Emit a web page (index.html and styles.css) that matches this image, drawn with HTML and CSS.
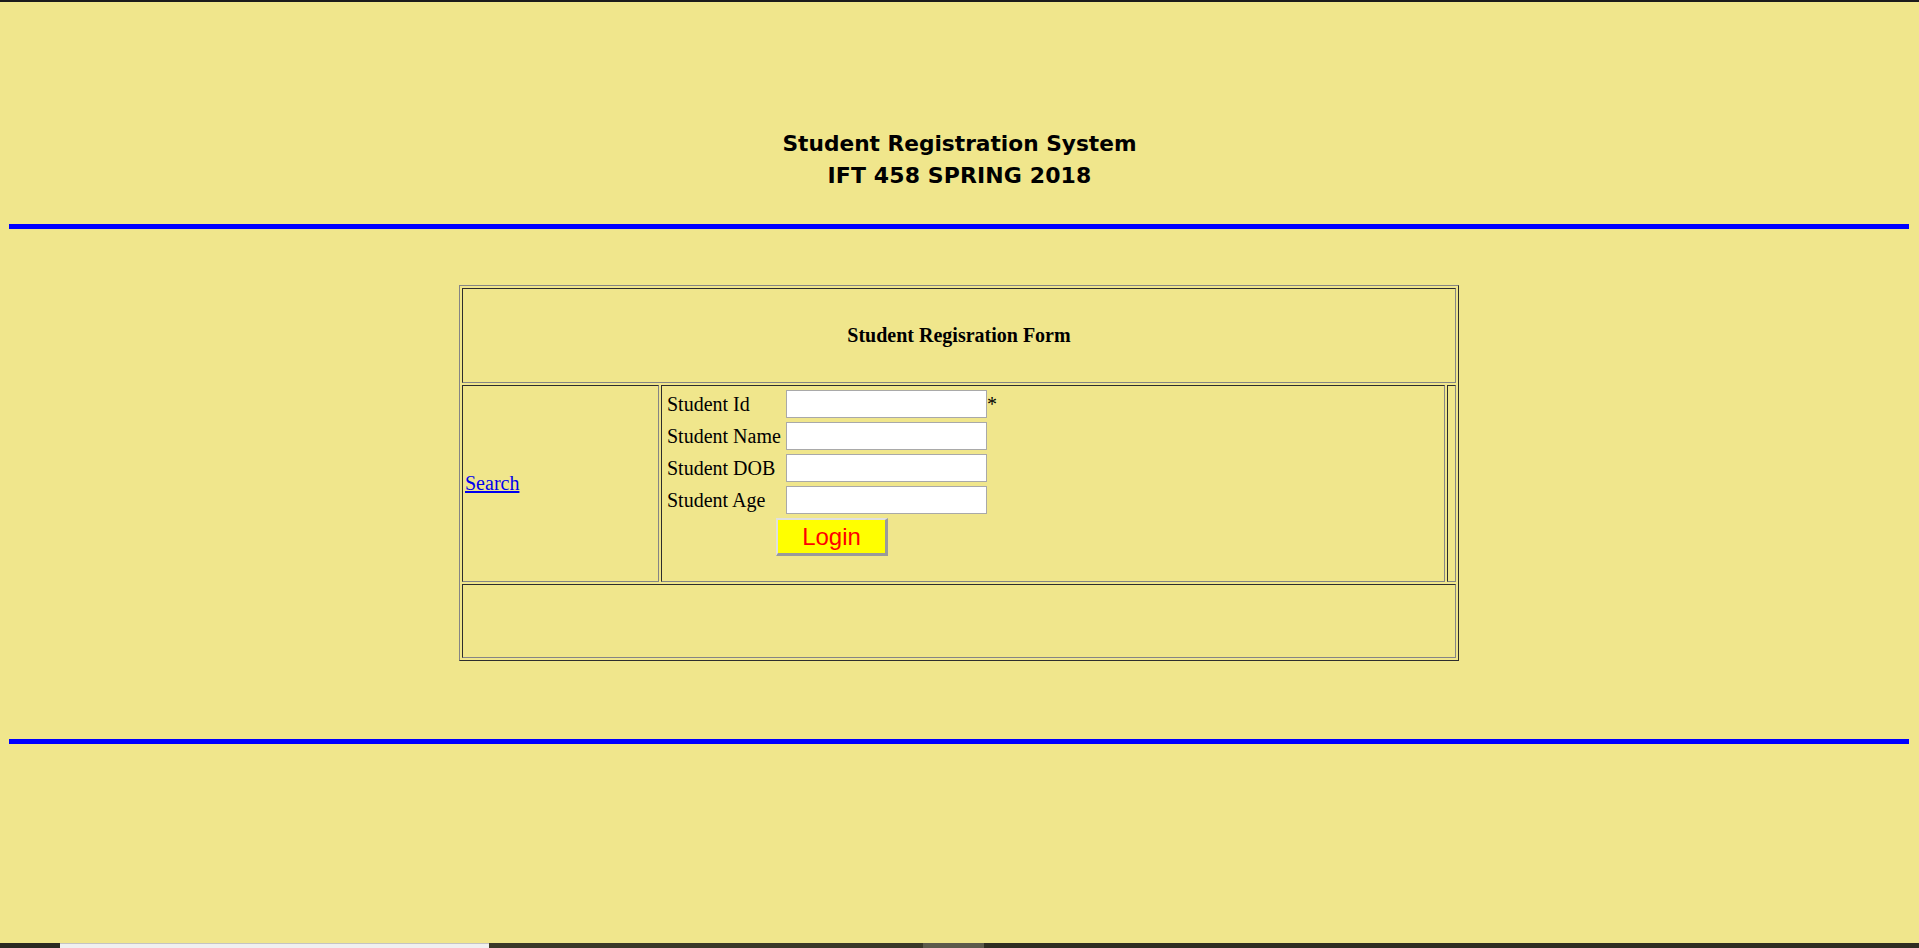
FILE: index.html
```html
<!DOCTYPE html>
<html lang="en">
<head>
<meta charset="utf-8">
<title>Student Registration System</title>
<link rel="stylesheet" href="styles.css">
</head>
<body>
  <div class="topline"></div>
  <header class="banner">
    <div class="banner-line banner-line-1">Student Registration System</div>
    <div class="banner-line banner-line-2">IFT 458 SPRING 2018</div>
  </header>
  <div class="rule rule-top"></div>

  <table class="regform">
    <tr>
      <td class="cell cell-title" colspan="3">Student Regisration Form</td>
    </tr>
    <tr>
      <td class="cell cell-nav"><a class="nav-link" href="#">Search</a></td>
      <td class="cell cell-main">
        <form class="fields">
          <label class="field-label" for="sid">Student Id</label>
          <input class="field-input" id="sid" type="text">
          <span class="field-req">*</span>

          <label class="field-label" for="sname">Student Name</label>
          <input class="field-input" id="sname" type="text">
          <span class="field-req"></span>

          <label class="field-label" for="sdob">Student DOB</label>
          <input class="field-input" id="sdob" type="text">
          <span class="field-req"></span>

          <label class="field-label" for="sage">Student Age</label>
          <input class="field-input" id="sage" type="text">
          <span class="field-req"></span>

          <button class="login-btn" type="button">Login</button>
        </form>
      </td>
      <td class="cell cell-edge"></td>
    </tr>
    <tr>
      <td class="cell cell-foot" colspan="3"></td>
    </tr>
  </table>

  <div class="rule rule-bottom"></div>

  <div class="taskbar">
    <span class="seg seg-start"></span>
    <span class="seg seg-search"></span>
    <span class="seg seg-mid"></span>
    <span class="seg seg-app"></span>
    <span class="seg seg-rest"></span>
  </div>
</body>
</html>
```

FILE: styles.css
```css
html, body {
  margin: 0;
  padding: 0;
}

body {
  background: #f0e68c;
  color: #000;
  font-family: "Liberation Serif", "Times New Roman", serif;
  font-size: 20px;
  min-height: 948px;
}

.topline {
  height: 2px;
  background: #1b1b1b;
}

.banner {
  margin-top: 126px;
  text-align: center;
  font-family: "DejaVu Sans", Verdana, sans-serif;
  font-weight: bold;
  font-size: 22px;
  line-height: 32px;
  color: #000;
}

.banner-line-1 {
  font-size: 21.7px;
}

.banner-line-2 {
  letter-spacing: 0.1px;
}

.rule {
  height: 5px;
  background: #0000ff;
  margin-left: 9px;
  margin-right: 10px;
}

.rule-top {
  margin-top: 32px;
}

.rule-bottom {
  margin-top: 78px;
}

.regform {
  box-sizing: border-box;
  width: 1000px;
  margin: 56px 0 0 459px;
  border-collapse: separate;
  border-spacing: 2px;
  border: 1px solid;
  border-color: #858585 #2d2d2d #2d2d2d #858585;
}

.cell {
  box-sizing: border-box;
  border: 1px solid;
  border-color: #2d2d2d #858585 #858585 #2d2d2d;
  padding: 0;
}

.cell-title {
  height: 95px;
  text-align: center;
  vertical-align: middle;
  font-weight: bold;
}

.cell-nav {
  width: 197px;
  height: 197px;
  vertical-align: middle;
  padding-left: 2px;
}

.nav-link {
  color: #0000ee;
  text-decoration: underline;
}

.cell-main {
  width: 784px;
  vertical-align: top;
  padding: 4px 0 0 5px;
}

.cell-edge {
  width: 9px;
}

.cell-foot {
  height: 74px;
}

.fields {
  display: grid;
  grid-template-columns: 119px 201px 10px;
  grid-template-rows: repeat(4, 28px) auto;
  row-gap: 4px;
  align-items: center;
  width: 330px;
  margin: 0;
}

.field-label {
  font-size: 20px;
  white-space: nowrap;
}

.field-input {
  box-sizing: border-box;
  width: 201px;
  height: 28px;
  margin: 0;
  padding: 0 3px;
  border: 1px solid #a9a9a9;
  background: #fff;
  font-size: 16px;
}

.field-req {
  font-size: 20px;
  line-height: 1;
}

.login-btn {
  grid-column: 1 / -1;
  justify-self: center;
  align-self: start;
  box-sizing: border-box;
  width: 112px;
  height: 38px;
  margin: 0;
  padding: 0;
  background: #ffff00;
  color: #ff0000;
  font-family: "Liberation Sans", Arial, sans-serif;
  font-size: 24px;
  border-style: solid;
  border-width: 2px 3px 3px 2px;
  border-color: #e0e0e0 #9a9a9a #9a9a9a #e0e0e0;
}

.taskbar {
  position: fixed;
  left: 0;
  right: 0;
  bottom: 0;
  height: 5px;
  display: flex;
  background: #2f2d22;
}

.seg {
  display: block;
  height: 5px;
}

.seg-start {
  width: 60px;
  background: #2a2922;
}

.seg-search {
  width: 429px;
  background: #f0f0f0;
  box-shadow: inset 0 1px 0 #c4c4c4;
}

.seg-mid {
  width: 434px;
  background: #3a3828;
}

.seg-app {
  width: 61px;
  background: #5d5a4b;
}

.seg-rest {
  flex: 1;
  background: #2f2d22;
}
```
